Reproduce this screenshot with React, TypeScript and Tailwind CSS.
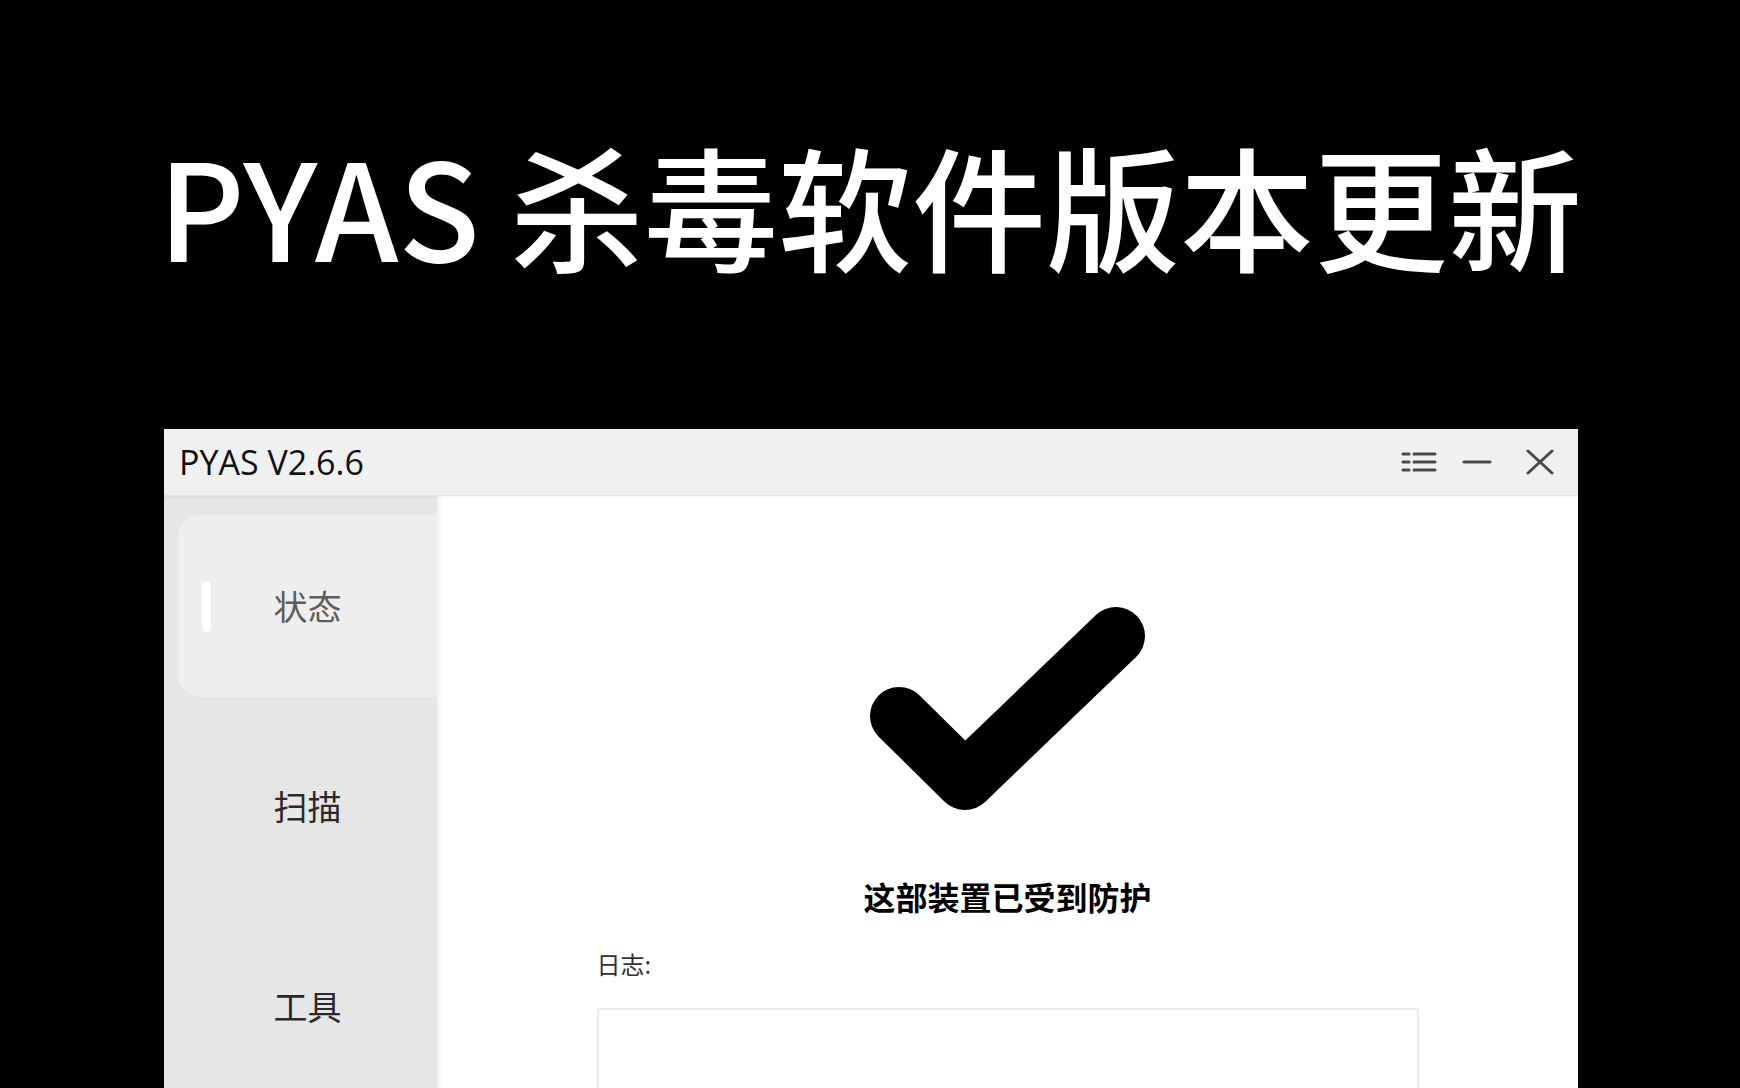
import React from "react";

const cjk = { fontFamily: '"Noto Sans CJK SC", "Noto Sans", sans-serif' };
const ui = { fontFamily: '"Open Sans", "Noto Sans CJK SC", sans-serif' };

function MenuIcon() {
  return (
    <svg width="36" height="22" viewBox="0 0 36 22" fill="none" stroke="#4a4a4a" strokeWidth="3" strokeLinecap="round">
      <line x1="2" y1="3" x2="8" y2="3" />
      <line x1="13" y1="3" x2="34" y2="3" />
      <line x1="2" y1="11" x2="8" y2="11" />
      <line x1="13" y1="11" x2="34" y2="11" />
      <line x1="2" y1="19" x2="8" y2="19" />
      <line x1="13" y1="19" x2="34" y2="19" />
    </svg>
  );
}

function MinIcon() {
  return (
    <svg width="30" height="6" viewBox="0 0 30 6" fill="none" stroke="#4a4a4a" strokeWidth="3" strokeLinecap="round">
      <line x1="2" y1="3" x2="28" y2="3" />
    </svg>
  );
}

function CloseIcon() {
  return (
    <svg width="28" height="26" viewBox="0 0 28 26" fill="none" stroke="#4a4a4a" strokeWidth="3" strokeLinecap="round">
      <line x1="2" y1="2" x2="26" y2="24" />
      <line x1="26" y1="2" x2="2" y2="24" />
    </svg>
  );
}

function Check() {
  return (
    <svg width="276" height="204" viewBox="0 0 276 204" fill="none">
      <polyline
        points="29,109 95,174 246,29"
        stroke="#000"
        strokeWidth="58"
        strokeLinecap="round"
        strokeLinejoin="round"
      />
    </svg>
  );
}

function NavItem({ label, active }: { label: string; active?: boolean }) {
  return (
    <div
      className={
        "relative ml-[14px] h-[182px] flex items-center justify-center rounded-l-[22px] " +
        (active ? "bg-[#eeeeee]" : "")
      }
    >
      {active && <div className="absolute left-[24px] top-[66px] w-[9px] h-[51px] rounded-full bg-white" />}
      <span
        className={"text-[34px] leading-none " + (active ? "text-[#5e5e5e]" : "text-[#2a2a2a]")}
        style={cjk}
      >
        {label}
      </span>
    </div>
  );
}

export default function App() {
  return (
    <div className="w-[1740px] h-[1088px] bg-black overflow-hidden flex flex-col">
      <div className="h-[429px] flex justify-center pt-[137px] shrink-0">
        <h1 className="text-white text-[134px] leading-none font-medium whitespace-nowrap" style={cjk}>
          PYAS 杀毒软件版本更新
        </h1>
      </div>
      <div className="ml-[164px] w-[1414px] flex-1 flex flex-col bg-white overflow-hidden">
        <div className="h-[67px] shrink-0 bg-[#f0f0f0] border-b border-[#e2e2e2] flex items-center pl-[15px] pr-[24px] shadow-[0_1px_3px_rgba(0,0,0,0.06)] relative z-10">
          <span className="text-[34px] text-[#111] leading-none" style={ui}>
            PYAS V2.6.6
          </span>
          <div className="ml-auto flex items-center">
            <MenuIcon />
            <div className="ml-[25px]">
              <MinIcon />
            </div>
            <div className="ml-[34px]">
              <CloseIcon />
            </div>
          </div>
        </div>
        <div className="flex-1 flex">
          <div className="w-[273px] shrink-0 bg-[#e6e6e6] pt-[19px] flex flex-col gap-[18px] shadow-[2px_0_6px_rgba(0,0,0,0.08)] relative z-[1]">
            <NavItem label="状态" active />
            <NavItem label="扫描" />
            <NavItem label="工具" />
          </div>
          <div className="flex-1 flex flex-col items-center pt-[111px]">
            <Check />
            <div className="mt-[69px] text-[32px] font-bold leading-none text-black" style={cjk}>
              这部装置已受到防护
            </div>
            <div className="w-[822px] mt-[40px]">
              <div className="text-[24px] leading-none text-[#333]" style={cjk}>
                日志:
              </div>
              <div className="mt-[32px] h-[200px] border-2 border-[#ececec] bg-white" />
            </div>
          </div>
        </div>
      </div>
    </div>
  );
}
